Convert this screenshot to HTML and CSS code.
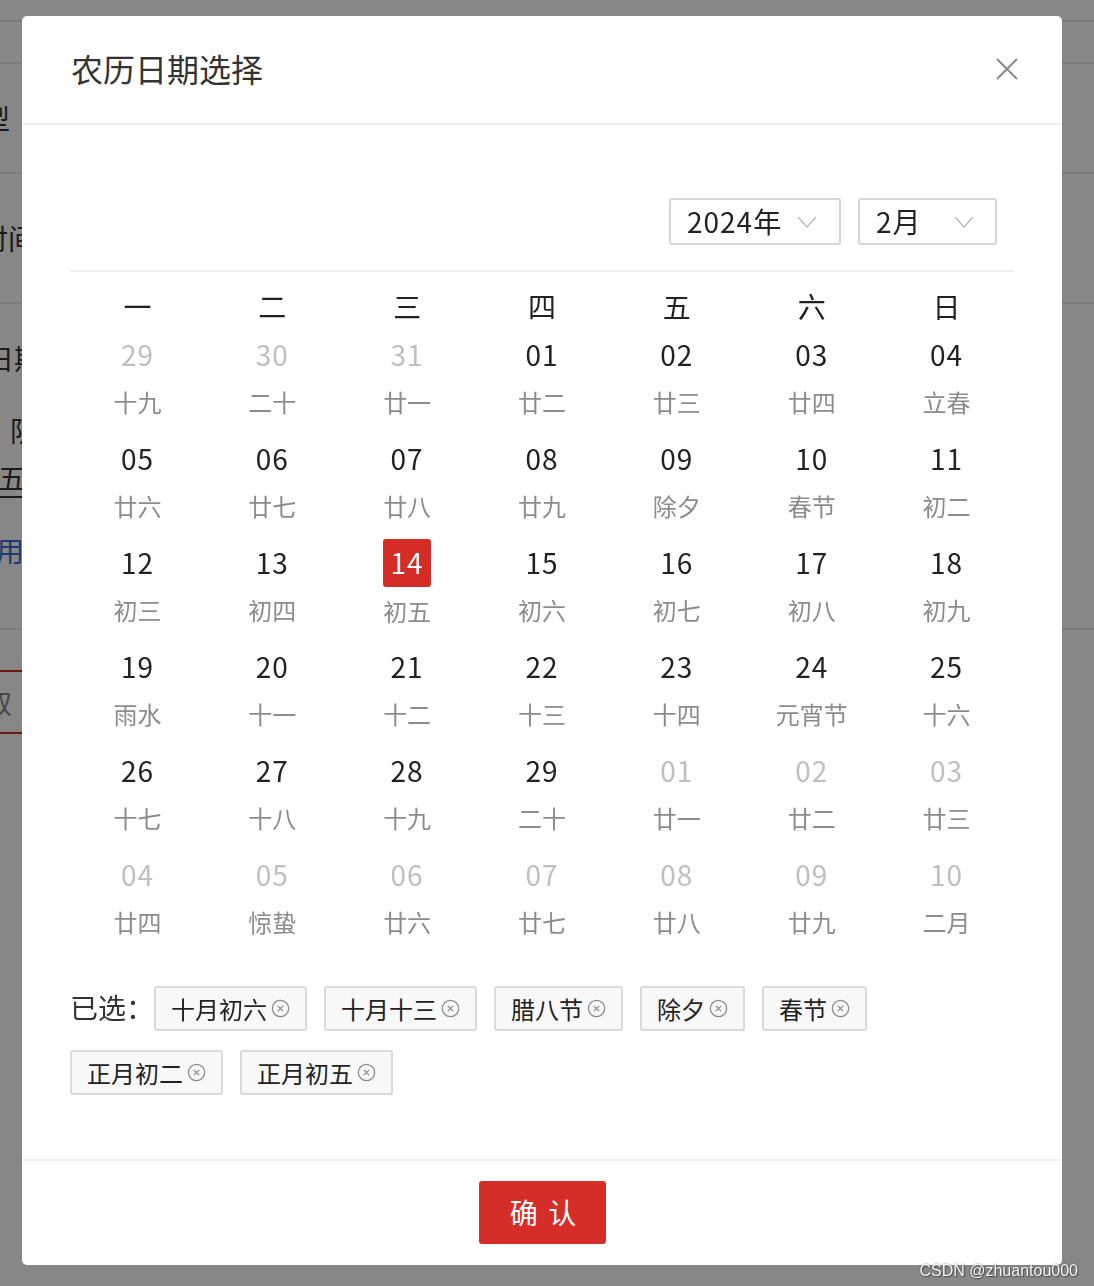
FILE: index.html
```html
<!DOCTYPE html>
<html lang="zh-CN">
<head>
<meta charset="utf-8">
<title>农历日期选择</title>
<link rel="stylesheet" href="styles.css">
</head>
<body>
<div class="page">
  <div class="row row-top"></div>
  <div class="row row-bar"></div>
  <div class="row row-field"><span class="label label-type">类型</span></div>
  <div class="row row-field row-tall"><span class="label label-time">时间</span></div>
  <div class="row row-date">
    <span class="label label-date">日期</span>
    <span class="sub">阴历</span>
    <span class="value">初五</span>
    <span class="link">用途</span>
  </div>
  <div class="row row-actions"><span class="cancel">取 消</span></div>
</div>

<div class="mask">
  <div class="dialog">
    <div class="dialog-head">
      <h2 class="dialog-title">农历日期选择</h2>
      <svg class="close" width="24" height="24" viewBox="0 0 24 24"><path d="M2 2 L22 22 M22 2 L2 22" stroke="#8a8a8a" stroke-width="2" fill="none"/></svg>
    </div>

    <div class="dialog-body">
      <div class="pickers">
        <div class="picker picker-year"><span>2024年</span><svg width="20" height="12" viewBox="0 0 20 12"><polyline points="1,1 10,11 19,1" fill="none" stroke="#bdbdbd" stroke-width="1.5"/></svg></div>
        <div class="picker picker-month"><span>2月</span><svg width="20" height="12" viewBox="0 0 20 12"><polyline points="1,1 10,11 19,1" fill="none" stroke="#bdbdbd" stroke-width="1.5"/></svg></div>
      </div>

      <div class="calendar">
        <div class="week">一</div><div class="week">二</div><div class="week">三</div><div class="week">四</div><div class="week">五</div><div class="week">六</div><div class="week">日</div>

        <div class="day off"><b>29</b><i>十九</i></div>
        <div class="day off"><b>30</b><i>二十</i></div>
        <div class="day off"><b>31</b><i>廿一</i></div>
        <div class="day"><b>01</b><i>廿二</i></div>
        <div class="day"><b>02</b><i>廿三</i></div>
        <div class="day"><b>03</b><i>廿四</i></div>
        <div class="day"><b>04</b><i>立春</i></div>

        <div class="day"><b>05</b><i>廿六</i></div>
        <div class="day"><b>06</b><i>廿七</i></div>
        <div class="day"><b>07</b><i>廿八</i></div>
        <div class="day"><b>08</b><i>廿九</i></div>
        <div class="day"><b>09</b><i>除夕</i></div>
        <div class="day"><b>10</b><i>春节</i></div>
        <div class="day"><b>11</b><i>初二</i></div>

        <div class="day"><b>12</b><i>初三</i></div>
        <div class="day"><b>13</b><i>初四</i></div>
        <div class="day active"><b>14</b><i>初五</i></div>
        <div class="day"><b>15</b><i>初六</i></div>
        <div class="day"><b>16</b><i>初七</i></div>
        <div class="day"><b>17</b><i>初八</i></div>
        <div class="day"><b>18</b><i>初九</i></div>

        <div class="day"><b>19</b><i>雨水</i></div>
        <div class="day"><b>20</b><i>十一</i></div>
        <div class="day"><b>21</b><i>十二</i></div>
        <div class="day"><b>22</b><i>十三</i></div>
        <div class="day"><b>23</b><i>十四</i></div>
        <div class="day"><b>24</b><i>元宵节</i></div>
        <div class="day"><b>25</b><i>十六</i></div>

        <div class="day"><b>26</b><i>十七</i></div>
        <div class="day"><b>27</b><i>十八</i></div>
        <div class="day"><b>28</b><i>十九</i></div>
        <div class="day"><b>29</b><i>二十</i></div>
        <div class="day off"><b>01</b><i>廿一</i></div>
        <div class="day off"><b>02</b><i>廿二</i></div>
        <div class="day off"><b>03</b><i>廿三</i></div>

        <div class="day off"><b>04</b><i>廿四</i></div>
        <div class="day off"><b>05</b><i>惊蛰</i></div>
        <div class="day off"><b>06</b><i>廿六</i></div>
        <div class="day off"><b>07</b><i>廿七</i></div>
        <div class="day off"><b>08</b><i>廿八</i></div>
        <div class="day off"><b>09</b><i>廿九</i></div>
        <div class="day off"><b>10</b><i>二月</i></div>
      </div>

      <div class="chosen">
        <span class="chosen-label">已选：</span>
        <span class="tag">十月初六<svg viewBox="0 0 20 20"><circle cx="10" cy="10" r="8.6" fill="none" stroke="#8a8a8a" stroke-width="1.3"/><path d="M7.2 7.2 L12.8 12.8 M12.8 7.2 L7.2 12.8" stroke="#8a8a8a" stroke-width="1.3"/></svg></span>
        <span class="tag">十月十三<svg viewBox="0 0 20 20"><circle cx="10" cy="10" r="8.6" fill="none" stroke="#8a8a8a" stroke-width="1.3"/><path d="M7.2 7.2 L12.8 12.8 M12.8 7.2 L7.2 12.8" stroke="#8a8a8a" stroke-width="1.3"/></svg></span>
        <span class="tag">腊八节<svg viewBox="0 0 20 20"><circle cx="10" cy="10" r="8.6" fill="none" stroke="#8a8a8a" stroke-width="1.3"/><path d="M7.2 7.2 L12.8 12.8 M12.8 7.2 L7.2 12.8" stroke="#8a8a8a" stroke-width="1.3"/></svg></span>
        <span class="tag">除夕<svg viewBox="0 0 20 20"><circle cx="10" cy="10" r="8.6" fill="none" stroke="#8a8a8a" stroke-width="1.3"/><path d="M7.2 7.2 L12.8 12.8 M12.8 7.2 L7.2 12.8" stroke="#8a8a8a" stroke-width="1.3"/></svg></span>
        <span class="tag">春节<svg viewBox="0 0 20 20"><circle cx="10" cy="10" r="8.6" fill="none" stroke="#8a8a8a" stroke-width="1.3"/><path d="M7.2 7.2 L12.8 12.8 M12.8 7.2 L7.2 12.8" stroke="#8a8a8a" stroke-width="1.3"/></svg></span>
        <span class="tag">正月初二<svg viewBox="0 0 20 20"><circle cx="10" cy="10" r="8.6" fill="none" stroke="#8a8a8a" stroke-width="1.3"/><path d="M7.2 7.2 L12.8 12.8 M12.8 7.2 L7.2 12.8" stroke="#8a8a8a" stroke-width="1.3"/></svg></span>
        <span class="tag">正月初五<svg viewBox="0 0 20 20"><circle cx="10" cy="10" r="8.6" fill="none" stroke="#8a8a8a" stroke-width="1.3"/><path d="M7.2 7.2 L12.8 12.8 M12.8 7.2 L7.2 12.8" stroke="#8a8a8a" stroke-width="1.3"/></svg></span>
      </div>
    </div>

    <div class="dialog-foot">
      <button class="confirm">确 认</button>
    </div>
  </div>
  <div class="watermark">CSDN @zhuantou000</div>
</div>
</body>
</html>
```

FILE: styles.css
```css
* { box-sizing: border-box; }

html, body {
  margin: 0;
  padding: 0;
  background: #fff;
  font-family: "Noto Sans CJK SC", "Noto Sans", sans-serif;
  color: #222;
  overflow: hidden;
}

/* form page underneath the dialog, scrolled a little to the side */
.page {
  margin-left: -46px;
  width: 1180px;
}
.row {
  border-bottom: 2px solid #e6e6e6;
  display: flex;
  flex-direction: column;
  justify-content: center;
  align-items: flex-start;
}
.row-top { height: 22px; }
.row-bar { height: 42px; }
.row-field { height: 110px; }
.row-tall { height: 130px; justify-content: flex-start; padding-top: 44px; }
.label { font-size: 28px; line-height: 40px; color: #333; white-space: nowrap; }
.label-time { margin-left: 26px; }
.label-date { margin-left: 32px; }
.row-date {
  height: 326px;
  justify-content: flex-start;
  padding-top: 34px;
}
.row-date .sub { font-size: 28px; line-height: 40px; margin-top: 32px; margin-left: 56px; color: #333; }
.row-date .value {
  font-size: 28px; line-height: 38px; margin-top: 8px; color: #333;
  border-bottom: 2px solid #333; width: 160px; padding-left: 16px;
}
.row-date .link { font-size: 28px; line-height: 40px; margin-top: 32px; margin-left: 42px; color: #3c6fd0; }
.row-actions { border-bottom: none; height: 300px; justify-content: flex-start; padding-top: 40px; }
.cancel {
  width: 300px; height: 64px; line-height: 60px;
  border: 2px solid #c8312a; border-radius: 4px;
  font-size: 28px; color: #888; padding-left: 28px; letter-spacing: 8px;
}

/* overlay */
.mask {
  position: fixed;
  inset: 0;
  background: rgba(0, 0, 0, 0.47);
  padding: 16px 32px 21px 22px;
  display: flex;
}

.dialog {
  width: 1040px;
  height: 1249px;
  background: #fff;
  border-radius: 5px;
  display: flex;
  flex-direction: column;
}

.dialog-head {
  height: 109px;
  border-bottom: 2px solid #efefef;
  display: flex;
  align-items: center;
  justify-content: space-between;
  padding: 0 43px 2px 49px;
}
.dialog-title {
  margin: 0;
  font-size: 32px;
  font-weight: 400;
  color: #333;
  line-height: 44px;
  margin-bottom: 2px;
}
.close { width: 24px; height: 24px; margin-left: 2px; }

.dialog-body {
  flex: 1;
  padding: 73px 48px 0;
}

.pickers {
  display: flex;
  justify-content: flex-end;
  gap: 17px;
  padding-right: 17px;
  padding-bottom: 25px;
  border-bottom: 2px solid #efefef;
}
.picker {
  height: 47px;
  border: 2px solid #d6d6d6;
  border-radius: 3px;
  display: flex;
  align-items: center;
  justify-content: space-between;
  font-size: 28px;
  color: #222;
  letter-spacing: 1px;
}
.picker span { margin-top: -1px; }
.picker-year { width: 172px; padding: 0 22px 0 16px; }
.picker-month { width: 139px; padding: 0 21px 0 16px; }
.picker svg { flex: none; }

.calendar {
  display: grid;
  grid-template-columns: repeat(7, 1fr);
  padding-top: 10px;
  text-align: center;
}
.week {
  font-size: 28px;
  line-height: 48px;
  color: #222;
}
.day {
  display: flex;
  flex-direction: column;
  align-items: center;
  height: 104px;
}
.day b {
  font-weight: 400;
  font-size: 28px;
  line-height: 48px;
  height: 48px;
  min-width: 48px;
  color: #222;
  letter-spacing: 1px;
  border-radius: 3px;
}
.day i {
  font-style: normal;
  font-size: 24px;
  line-height: 48px;
  color: #8c8c8c;
}
.day.off b { color: #bfbfbf; }
.day.active b {
  background: #d52d26;
  color: #fff;
  line-height: 46px;
  margin-top: 1px;
}

.chosen {
  display: flex;
  flex-wrap: wrap;
  align-items: center;
  row-gap: 19px;
  margin-top: 32px;
}
.chosen-label {
  width: 84px;
  font-size: 28px;
  line-height: 45px;
  color: #333;
  white-space: nowrap;
  margin-top: -2px;
}
.tag {
  height: 45px;
  border: 2px solid #dadada;
  border-radius: 3px;
  background: #f8f8f8;
  padding: 0 15px;
  margin-right: 17px;
  display: flex;
  align-items: center;
  gap: 4px;
  font-size: 24px;
  color: #222;
}
.tag svg { width: 19px; height: 19px; flex: none; }

.dialog-foot {
  border-top: 2px solid #efefef;
  padding: 20px 0 21px;
  display: flex;
  justify-content: center;
}
.confirm {
  width: 127px;
  height: 63px;
  border: none;
  border-radius: 3px;
  background: #d52d28;
  color: #fff;
  font-family: "Noto Sans CJK SC", sans-serif;
  font-size: 28px;
  letter-spacing: 2px;
  padding: 0 0 2px 4px;
}

.watermark {
  position: absolute;
  right: 16px;
  bottom: 6px;
  font-family: "Liberation Sans", sans-serif;
  font-size: 16px;
  color: #fff;
  text-shadow: 0 0 2px #555, 1px 1px 1px #444;
  opacity: 0.9;
}
```
